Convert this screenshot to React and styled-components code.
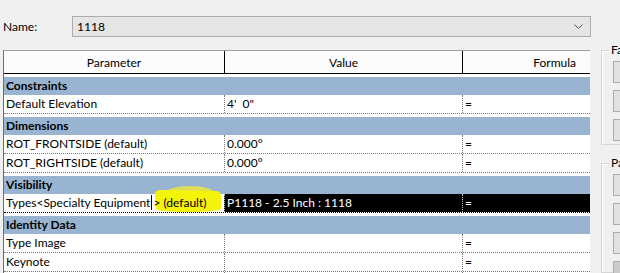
import React from "react";
import styled, { createGlobalStyle } from "styled-components";

const GlobalStyle = createGlobalStyle`
  html, body {
    margin: 0;
    padding: 0;
    background: #f0f0f0;
  }
  body {
    font-family: "Lato", "Noto Sans", sans-serif;
    font-size: 12px;
    color: #000;
  }
`;

const categories = [
  {
    title: "Constraints",
    rows: [{ name: "Default Elevation", value: "4'  0\"" }],
  },
  {
    title: "Dimensions",
    rows: [
      { name: "ROT_FRONTSIDE (default)", value: "0.000°" },
      { name: "ROT_RIGHTSIDE (default)", value: "0.000°" },
    ],
  },
  {
    title: "Visibility",
    rows: [
      {
        name: "Types<Specialty Equipment",
        tail: "> (default)",
        value: "P1118 - 2.5 Inch : 1118",
        selected: true,
      },
    ],
  },
  {
    title: "Identity Data",
    rows: [
      { name: "Type Image", value: "" },
      { name: "Keynote", value: "" },
      { name: "Model", value: "" },
    ],
  },
];

// yellow highlighter mark drawn over the "(default)" label
const Highlight = () => (
  <Marker width="72" height="30" viewBox="0 0 72 30">
    <ellipse cx="37" cy="10" rx="25" ry="8" fill="#dede5a" />
    <path
      d="M2 9 Q3 6 8 6 L64 7 Q68 8 68 12 L68 25 Q64 28 35 28 Q6 28 3 25 Z"
      fill="#f3f30c"
    />
  </Marker>
);

const App = () => {
  return (
    <>
      <GlobalStyle />
      <Page>
        <NameRow>
          <NameLabel>Name:</NameLabel>
          <Combo>
            <span>1118</span>
            <svg width="9" height="6" viewBox="0 0 9 6">
              <path d="M0.5 0.5 L4.5 4.5 L8.5 0.5" fill="none" stroke="#555" />
            </svg>
          </Combo>
        </NameRow>
        <Main>
          <Table>
            <HeaderRow>
              <HeadCell>Parameter</HeadCell>
              <HeadCell>Value</HeadCell>
              <HeadCell $right>Formula</HeadCell>
            </HeaderRow>
            <Body>
              {categories.map((cat) => (
                <React.Fragment key={cat.title}>
                  <Category>{cat.title}</Category>
                  {cat.rows.map((row) => (
                    <ParamRow key={row.name} $selected={row.selected}>
                      <NameCell>
                        {row.tail && <Highlight />}
                        <Label>
                          {row.name}
                          {row.tail && (
                            <>
                              <Caret />
                              {row.tail}
                            </>
                          )}
                        </Label>
                      </NameCell>
                      <ValueCell $selected={row.selected}>{row.value}</ValueCell>
                      <ValueCell $selected={row.selected}>=</ValueCell>
                    </ParamRow>
                  ))}
                </React.Fragment>
              ))}
            </Body>
          </Table>
          <Side>
            <Group $top={0} $height={95}>
              <GroupTitle>Family Types</GroupTitle>
              <SideButton />
              <SideButton />
              <SideButton />
            </Group>
            <Group $top={18} $height={110}>
              <GroupTitle>Parameters</GroupTitle>
              <SideButton />
              <SideButton />
              <SideButton />
              <SideButton $dark />
            </Group>
          </Side>
        </Main>
      </Page>
    </>
  );
};

export default App;

const Page = styled.div`
  width: 620px;
  height: 273px;
  overflow: hidden;
  padding-top: 16px;
  box-sizing: border-box;
`;

const NameRow = styled.div`
  display: flex;
  align-items: center;
  height: 21px;
  padding-left: 3px;
`;

const NameLabel = styled.div`
  width: 69px;
`;

const Combo = styled.div`
  width: 519px;
  height: 21px;
  box-sizing: border-box;
  border: 1px solid #acacac;
  background: #e5e5e5;
  display: flex;
  align-items: center;
  justify-content: space-between;
  padding: 0 7px 0 4px;
`;

const Main = styled.div`
  display: flex;
  margin-top: 13px;
`;

const Table = styled.div`
  flex-shrink: 0;
  margin-left: 3px;
  width: 587px;
  height: 230px;
  border-left: 1px solid #6d6d6d;
  border-top: 1px solid #a0a0a0;
  background: #fff;
  box-sizing: border-box;
  overflow: hidden;
`;

const HeaderRow = styled.div`
  display: grid;
  grid-template-columns: 220px 238px 1fr;
  height: 22px;
  border-bottom: 1px solid #000;
  background: #fcfcfc;
`;

const HeadCell = styled.div`
  display: flex;
  align-items: center;
  justify-content: ${(p) => (p.$right ? "flex-end" : "center")};
  padding-right: ${(p) => (p.$right ? "14px" : "0")};
  & + & {
    border-left: 1px solid #000;
  }
`;

const Body = styled.div`
  display: flex;
  flex-direction: column;
`;

const Category = styled.div`
  margin-top: 3px;
  height: 18px;
  line-height: 18px;
  background: #99b4d1;
  font-weight: bold;
  padding-left: 2px;
`;

const ParamRow = styled.div`
  display: grid;
  grid-template-columns: 220px 238px 1fr;
  height: 19px;
  box-sizing: border-box;
  border-bottom: 1px dotted ${(p) => (p.$selected ? "#000" : "#7a7a7a")};
`;

const NameCell = styled.div`
  position: relative;
  padding-left: 2px;
  line-height: 18px;
  white-space: nowrap;
`;

const Label = styled.span`
  position: relative;
`;

const Caret = styled.span`
  display: inline-block;
  width: 1px;
  height: 15px;
  margin: 0 1px -3px 1px;
  background: #000;
`;

const Marker = styled.svg`
  position: absolute;
  left: 149px;
  top: -10px;
`;

const ValueCell = styled.div`
  border-left: 1px dotted ${(p) => (p.$selected ? "#bbb" : "#7a7a7a")};
  background: ${(p) => (p.$selected ? "#000" : "#fff")};
  color: ${(p) => (p.$selected ? "#fff" : "#000")};
  padding-left: 2px;
  line-height: 18px;
  white-space: pre;
`;

const Side = styled.div`
  flex: 1;
  min-width: 0;
  display: flex;
  flex-direction: column;
  padding-left: 11px;
`;

const Group = styled.div`
  position: relative;
  margin-top: ${(p) => p.$top}px;
  height: ${(p) => p.$height}px;
  border-top: 1px solid #d5d5d5;
  border-left: 1px solid #d5d5d5;
  border-bottom: 1px solid #d5d5d5;
  box-shadow: inset 1px 1px 0 #fff;
  padding: 10px 0 0 11px;
  box-sizing: border-box;
  display: flex;
  flex-direction: column;
  gap: 7px;
  white-space: nowrap;
`;

const GroupTitle = styled.div`
  position: absolute;
  top: -8px;
  left: 7px;
  background: #f0f0f0;
  padding: 0 2px;
  line-height: 14px;
`;

const SideButton = styled.div`
  width: 80px;
  height: 22px;
  flex-shrink: 0;
  box-sizing: border-box;
  border: 1px solid #adadad;
  background: ${(p) => (p.$dark ? "#cccccc" : "#e1e1e1")};
`;
